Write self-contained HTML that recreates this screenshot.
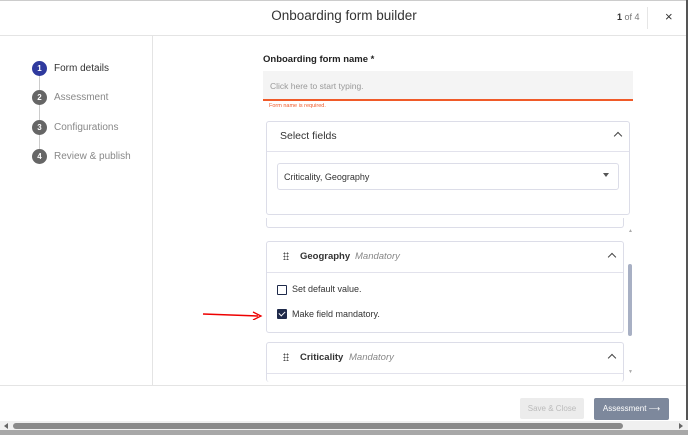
<!DOCTYPE html>
<html><head><style>
*{box-sizing:border-box;margin:0;padding:0}
body{width:688px;height:435px;overflow:hidden;background:#fff;font-family:"Liberation Sans",sans-serif;position:relative;color:#333}
.a{position:absolute}
.box{position:absolute;border:1px solid #dcdde8;border-radius:3px;background:#fff}
.step{position:absolute;left:32px;font-size:10px;color:#888}
.step .c{position:absolute;left:0;top:0;width:15px;height:15px;border-radius:50%;background:#666;color:#fff;font-size:8px;text-align:center;line-height:15px;font-weight:bold}
.step span.t{position:absolute;left:22px;top:2px;white-space:nowrap}
.chev{position:absolute;width:6px;height:6px;border-left:1.5px solid #444;border-top:1.5px solid #444;transform:rotate(45deg)}
.grip{position:absolute;width:6px;height:8px;background-image:radial-gradient(circle,#555 0.9px,transparent 1px);background-size:3px 3px}
</style></head><body>
<div class="a" style="left:0;top:0;width:688px;height:1px;background:#ccc"></div>
<div class="a" style="left:0;top:35px;width:688px;height:1px;background:#e4e4e4"></div>
<div class="a" style="left:0;top:8px;width:688px;text-align:center;font-size:13.5px;color:#333">Onboarding form builder</div>
<div class="a" style="left:617px;top:12px;font-size:9px;color:#777"><b style="color:#333">1</b> of 4</div>
<div class="a" style="left:647px;top:7px;width:1px;height:22px;background:#e6e6e6"></div>
<div class="a" style="left:665px;top:9px;font-size:13px;color:#333">×</div>
<div class="a" style="left:686px;top:0;width:2px;height:420px;background:#555"></div>

<div class="a" style="left:152px;top:36px;width:1px;height:350px;background:#e4e4e4"></div>
<div class="a" style="left:39px;top:70px;width:1px;height:90px;background:#ccc"></div>
<div class="step" style="top:61px"><div class="c" style="background:#2f3a9e">1</div><span class="t" style="color:#333;font-size:10px">Form details</span></div>
<div class="step" style="top:90px"><div class="c">2</div><span class="t">Assessment</span></div>
<div class="step" style="top:120px"><div class="c">3</div><span class="t">Configurations</span></div>
<div class="step" style="top:149px"><div class="c">4</div><span class="t">Review &amp; publish</span></div>

<div class="a" style="left:263px;top:54px;font-size:9.5px;font-weight:bold;color:#222">Onboarding form name *</div>
<div class="a" style="left:263px;top:71px;width:370px;height:30px;background:#f4f4f4;border-bottom:2px solid #f05a28"></div>
<div class="a" style="left:270px;top:81px;font-size:8.5px;color:#999">Click here to start typing.</div>
<div class="a" style="left:269px;top:103px;font-size:5.5px;color:#f05a28">Form name is required.</div>

<div class="box" style="left:266px;top:121px;width:364px;height:94px"></div>
<div class="a" style="left:267px;top:151px;width:362px;height:1px;background:#e2e2ec"></div>
<div class="a" style="left:280px;top:130px;font-size:10.5px;color:#333">Select fields</div>
<div class="chev" style="left:615px;top:133px"></div>
<div class="box" style="left:277px;top:163px;width:342px;height:27px"></div>
<div class="a" style="left:284px;top:172px;font-size:9px;color:#333">Criticality, Geography</div>
<div class="a" style="left:603px;top:173px;border-left:3.5px solid transparent;border-right:3.5px solid transparent;border-top:4px solid #555"></div>
<div class="box" style="left:266px;top:218px;width:358px;height:10px;border-top:none;border-radius:0 0 3px 3px"></div>

<div class="box" style="left:266px;top:241px;width:358px;height:92px"></div>
<div class="a" style="left:267px;top:272px;width:356px;height:1px;background:#e2e2ec"></div>
<div class="grip" style="left:283px;top:252px"></div>
<div class="a" style="left:300px;top:251px;font-size:9.5px;font-weight:bold;color:#333">Geography</div>
<div class="a" style="left:355px;top:251px;font-size:9.5px;font-style:italic;color:#888">Mandatory</div>
<div class="chev" style="left:609px;top:254px"></div>
<div class="a" style="left:277px;top:285px;width:10px;height:10px;border:1.5px solid #1f2a4a;border-radius:1px"></div>
<div class="a" style="left:292px;top:284px;font-size:9px;color:#333">Set default value.</div>
<div class="a" style="left:277px;top:309px;width:10px;height:10px;background:#1f2a4a;border-radius:1px"></div>
<div class="a" style="left:280px;top:310px;width:4px;height:6px;border-right:1.2px solid #fff;border-bottom:1.2px solid #fff;transform:rotate(45deg)"></div>
<div class="a" style="left:292px;top:309px;font-size:9px;color:#333">Make field mandatory.</div>
<svg class="a" style="left:200px;top:310px" width="64" height="10"><line x1="3" y1="4" x2="58" y2="6" stroke="#e00" stroke-width="1.5"/><path d="M53 2 L61 6 L53 10" fill="none" stroke="#e00" stroke-width="1.3"/></svg>

<div class="box" style="left:266px;top:342px;width:358px;height:40px;border-bottom:none"></div>
<div class="a" style="left:267px;top:373px;width:356px;height:1px;background:#e2e2ec"></div>
<div class="grip" style="left:283px;top:353px"></div>
<div class="a" style="left:300px;top:352px;font-size:9.5px;font-weight:bold;color:#333">Criticality</div>
<div class="a" style="left:349px;top:352px;font-size:9.5px;font-style:italic;color:#888">Mandatory</div>
<div class="chev" style="left:609px;top:355px"></div>

<div class="a" style="left:628px;top:228px;font-size:5px;color:#aaa">▲</div>
<div class="a" style="left:628px;top:264px;width:4px;height:72px;background:#a8b0c4;border-radius:2px"></div>
<div class="a" style="left:628px;top:369px;font-size:5px;color:#aaa">▼</div>

<div class="a" style="left:0;top:385px;width:686px;height:1px;background:#e4e4e4"></div>
<div class="a" style="left:520px;top:398px;width:64px;height:21px;background:#ececec;border-radius:2px;color:#bbb;font-size:8px;text-align:center;line-height:21px">Save &amp; Close</div>
<div class="a" style="left:594px;top:398px;width:75px;height:22px;background:#7d889c;border-radius:2px;color:#fff;font-size:8px;text-align:center;line-height:22px">Assessment ⟶</div>

<div class="a" style="left:0;top:421px;width:688px;height:9px;background:#f0f0f0"></div>
<div class="a" style="left:4px;top:423px;border-top:3px solid transparent;border-bottom:3px solid transparent;border-right:4px solid #666"></div>
<div class="a" style="left:13px;top:423px;width:610px;height:6px;background:#8a8a8a;border-radius:3px"></div>
<div class="a" style="left:679px;top:423px;border-top:3px solid transparent;border-bottom:3px solid transparent;border-left:4px solid #666"></div>
<div class="a" style="left:0;top:430px;width:688px;height:5px;background:#a8a8a8"></div>
</body></html>
